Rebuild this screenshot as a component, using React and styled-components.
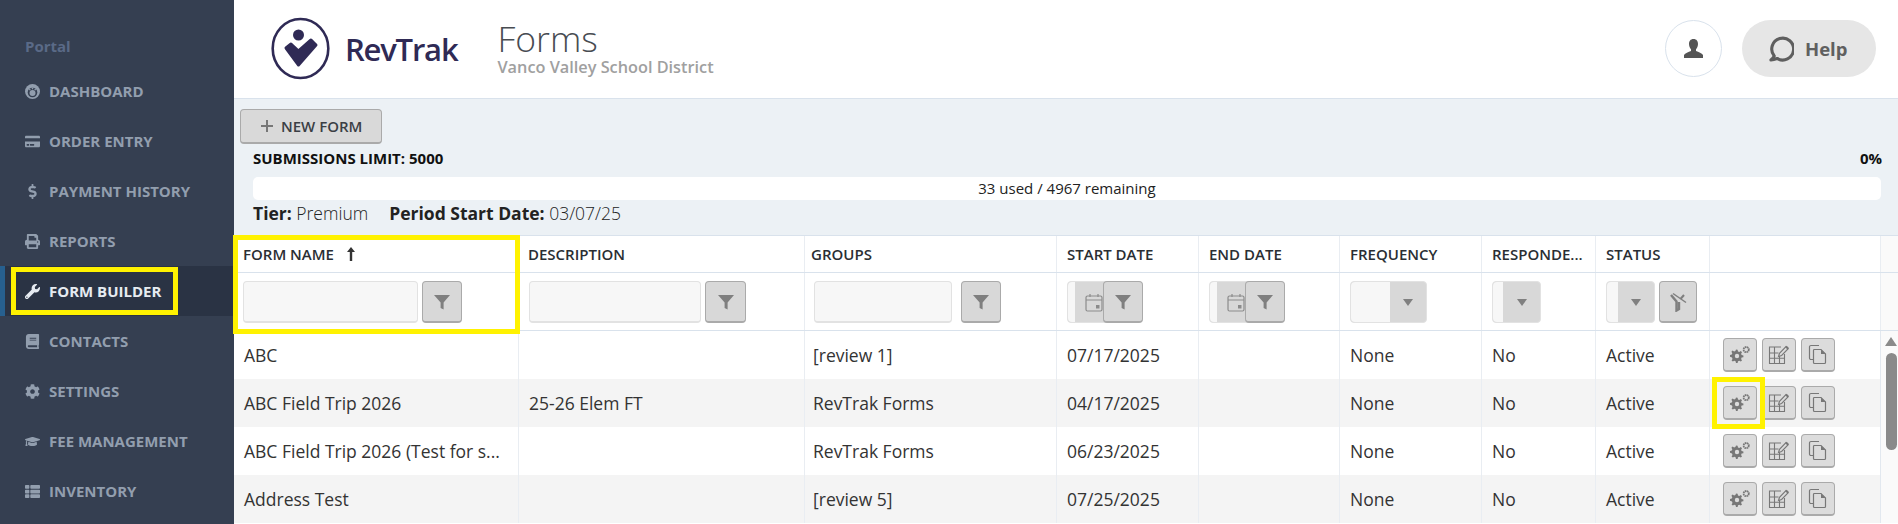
import React from "react";
import styled, { createGlobalStyle } from "styled-components";
import { FaCreditCard, FaDollarSign, FaPrint, FaWrench, FaBook, FaCog, FaGraduationCap, FaThList } from "react-icons/fa";

const Global = createGlobalStyle`
  html, body { margin: 0; padding: 0; height: 524px; overflow: hidden; background: #fff; }
  body { font-family: "Open Sans", "Liberation Sans", sans-serif; color: #333; }
  * { box-sizing: border-box; }
`;

const COLS = "285px 286px 252px 142px 141px 142px 114px 114px 171px 17px";

const Page = styled.div`display: flex; width: 1898px; height: 524px; position: relative; overflow: hidden;`;
const Sidebar = styled.nav`width: 234px; flex: none; background: #353f51; padding-top: 37px;`;
const PortalLabel = styled.div`height: 19px; margin: 0 0 10px 25px; font-size: 15px; line-height: 19px; font-weight: 700; color: #5a6a87;`;
const NavItem = styled.div`
  height: 50px; display: flex; align-items: center; padding-left: ${p => (p.$active ? 20 : 25)}px;
  gap: 9px; font-size: 15px; font-weight: 700;
  color: ${p => (p.$active ? "#e6ebf1" : "#929eae")};
  background: ${p => (p.$active ? "#2a3344" : "transparent")};
  border-left: ${p => (p.$active ? "5px solid #27608f" : "none")};
`;
const NavIcon = styled.span`width: 15px; display: flex; justify-content: center; font-size: 15px; flex: none;`;

const Main = styled.main`flex: 1; min-width: 0; display: flex; flex-direction: column;`;
const Header = styled.header`height: 99px; flex: none; display: flex; align-items: center; border-bottom: 1px solid #d9e2ec; padding: 0 0 1px 37px; background: #fff;`;
const LogoMark = styled.svg`width: 60px; height: 63px; flex: none;`;
const LogoText = styled.span`margin-left: 14px; margin-right: 40px; font-size: 31px; font-weight: 600; letter-spacing: -1.2px; color: #2f2a55; flex: none; line-height: 40px; white-space: nowrap;`;
const TitleBlock = styled.div`display: flex; flex-direction: column; margin-top: -1px;`;
const Title = styled.h1`margin: 0; font-size: 35.5px; line-height: 38px; font-weight: 300; color: #484c52;`;
const Subtitle = styled.div`font-size: 16.3px; line-height: 20px; font-weight: 600; color: #a0a0a0;`;
const HeaderRight = styled.div`margin-left: auto; display: flex; align-items: center; gap: 20px; padding-right: 22px;`;
const Avatar = styled.div`width: 57px; height: 57px; border-radius: 50%; border: 1px solid #d9e2ec; display: flex; align-items: center; justify-content: center;`;
const HelpButton = styled.div`width: 134px; height: 57px; border-radius: 29px; background: #e6e6e6; display: flex; align-items: center; padding-left: 26px; gap: 11px; font-size: 18.5px; font-weight: 700; color: #606060;`;

const Toolbar = styled.section`height: 137px; flex: none; background: #ecf1f5; border-bottom: 1px solid #d9e2ec; padding: 10px 16px 0 6px;`;
const NewFormButton = styled.div`width: 142px; height: 35px; border: 1px solid #aaa; border-bottom-width: 2px; border-radius: 4px; background: #d9d9d9; display: flex; align-items: center; padding-left: 19px; gap: 7px; font-size: 15px; font-weight: 600; color: #3b3f45;`;
const LimitRow = styled.div`display: flex; justify-content: space-between; margin: 4px 0 0 13px; font-size: 15px; line-height: 20px; font-weight: 700; color: #111;`;
const ProgressBar = styled.div`margin: 9px 1px 0 13px; height: 23px; border-radius: 5px; background: #fff; text-align: center; font-size: 15px; line-height: 23px; color: #222;`;
const TierRow = styled.div`margin: 2px 0 0 13px; font-size: 17.5px; line-height: 22px; font-weight: 300; color: #222; display: flex; gap: 21px;`;
const Strong = styled.b`font-weight: 700;`;

const GridRow = styled.div`
  display: grid; grid-template-columns: ${COLS}; flex: none; height: ${p => p.$h}px;
  background: ${p => (p.$stripe ? "#f4f4f4" : "#fff")};
  border-bottom: ${p => (p.$line ? "1px solid #d9e2ec" : "none")};
`;
const HeadCell = styled.div`
  padding-left: ${p => p.$pad ?? 10}px; display: flex; align-items: center; gap: 12px;
  font-size: 15px; font-weight: 600; color: #2a2e33; border-right: 1px solid #e9edf2; white-space: nowrap; overflow: hidden;
`;
const FilterCell = styled.div`padding: 8px 0 0 ${p => p.$pad ?? 10}px; display: flex; gap: ${p => p.$gap ?? 4}px; border-right: 1px solid #e9edf2;`;
const TextBox = styled.div`width: ${p => p.$w}px; height: 42px; background: #f7f7f7; border: 1px solid #e2e2e2; border-bottom-width: 2px; border-radius: 4px; flex: none;`;
const SquareBtn = styled.div`width: ${p => p.$w || 40}px; height: 42px; background: #d8d8d8; border: 1px solid #aaa; border-bottom-width: 2px; border-radius: 4px; display: flex; align-items: center; justify-content: center; flex: none;`;
const Picker = styled.div`width: ${p => p.$w}px; height: 42px; border-radius: 4px; background: #d8d8d8; border: 1px solid #e2e2e2; display: flex; flex: none; position: relative;`;
const PickerField = styled.div`width: ${p => p.$w}px; height: 100%; background: #f7f7f7; border-radius: 4px 0 0 4px; flex: none;`;
const PickerBody = styled.div`flex: 1; display: flex; align-items: center; justify-content: ${p => p.$left ? "flex-start" : "center"}; padding-left: ${p => p.$left ? 10 : 0}px;`;
const PickerBtn = styled(SquareBtn)`margin: -1px -1px -1px 0; width: 40px;`;
const Caret = styled.span`width: 0; height: 0; border-left: 5.5px solid transparent; border-right: 5.5px solid transparent; border-top: 7px solid #808080;`;

const Cell = styled.div`
  padding-left: ${p => p.$pad ?? 10}px; display: flex; align-items: center; gap: 5px; font-size: 17.5px; color: #333;
  border-right: 1px solid #e9edf2; white-space: nowrap; overflow: hidden;
`;
const ActionBtn = styled.div`width: 34px; height: 34px; background: #dcdcdc; border: 1px solid #aaa; border-bottom-width: 2px; border-radius: 4px; display: flex; align-items: center; justify-content: center; flex: none;`;
const ActionCell = styled(Cell)`padding-left: 13px; border-right: 1px solid #e2e8ef;`;
const ScrollCell = styled.div`background: #fafafa; position: relative;`;
const ScrollUp = styled.span`position: absolute; left: 4px; top: 6px; width: 0; height: 0; border-left: 6px solid transparent; border-right: 6px solid transparent; border-bottom: 9px solid #8a8a8a;`;
const ScrollThumb = styled.span`position: absolute; left: 5px; top: 22px; width: 11px; height: 97px; background: #8a8a8a; border-radius: 6px; z-index: 2;`;

const Highlight = styled.div`position: absolute; left: ${p => p.$x}px; top: ${p => p.$y}px; width: ${p => p.$w}px; height: ${p => p.$h}px; border: 5px solid #fff200; pointer-events: none; z-index: 3;`;

const Funnel = () => (
  <svg width="16" height="16" viewBox="0 0 16 16"><path d="M0 1h16L9.600 8.500V15.500L6.600 14V8.500z" fill="#7f7f7f" /></svg>
);
const FunnelOff = () => (
  <svg width="18" height="20" viewBox="0 0 18 20" fill="none">
    <path d="M2 3l5.500 6.500V18.500L10 17V10" stroke="#7f7f7f" strokeWidth="2.400" />
    <path d="M4 1.500l13 9" stroke="#7f7f7f" strokeWidth="1.500" />
    <path d="M15 3l-3.500 4" stroke="#7f7f7f" strokeWidth="2" />
  </svg>
);
const Dash = () => (
  <svg width="15" height="15" viewBox="0 0 15 15">
    <circle cx="7.500" cy="7.500" r="7.500" fill="currentColor" />
    <circle cx="7.500" cy="8.500" r="4.800" fill="#353f51" />
    <circle cx="7.500" cy="9" r="3" fill="currentColor" />
    <circle cx="4.800" cy="5.600" r=".8" fill="currentColor" />
    <circle cx="7.500" cy="4.600" r=".8" fill="currentColor" />
    <circle cx="10.200" cy="5.600" r=".8" fill="currentColor" />
  </svg>
);
const Calendar = () => (
  <svg width="18" height="19" viewBox="0 0 18 19" fill="none" stroke="#8b8b8b" strokeWidth="1.200">
    <rect x="1" y="3" width="16" height="15" rx="1.500" />
    <path d="M1 7h16M5 1v3M13 1v3" />
    <rect x="11" y="12" width="3.500" height="3.500" fill="#8b8b8b" stroke="none" />
  </svg>
);
const Cogs = () => (
  <svg width="22" height="20" viewBox="0 0 22 20">
    <path fill="#777" d="M7 4.600l1.600.1.4 1.700 1.300.6 1.500-.9 1.200 1.200-.9 1.500.5 1.300 1.800.4v1.700l-1.800.4-.5 1.300.9 1.500-1.200 1.200-1.500-.9-1.300.5-.4 1.800H7l-.4-1.800-1.300-.5-1.500.9-1.200-1.200.9-1.500-.5-1.300L1 11.700V10l1.800-.4.500-1.300-.9-1.500 1.200-1.200 1.500.9 1.300-.6z" />
    <circle cx="8" cy="11" r="2.200" fill="#dcdcdc" />
    <circle cx="17.200" cy="4.600" r="2.600" fill="none" stroke="#777" strokeWidth="1.800" strokeDasharray="1.600 .5" />
  </svg>
);
const GridEdit = () => (
  <svg width="22" height="21" viewBox="0 0 22 21" fill="none" stroke="#777" strokeWidth="1.100">
    <path d="M13 3H1.500v16.500h15V10M1.500 9h9M1.500 14.200h15M6.500 3v16.500M11.500 9v10.500" />
    <path d="M10.500 12.500l1-3.200L18 2.500l2.200 2.200-6.600 6.800z" fill="#dcdcdc" />
    <path d="M18 2.500l2.200 2.200" strokeWidth="2" />
  </svg>
);
const CopyDoc = () => (
  <svg width="20" height="21" viewBox="0 0 20 21" fill="none" stroke="#777" strokeWidth="1.200">
    <path d="M11 1.500H3A1.500 1.500 0 0 0 1.500 3v11A1.500 1.500 0 0 0 3 15.500h2" />
    <path d="M5.500 5.500h7.500l4.500 4.500v8.500a1 1 0 0 1-1 1h-10a1 1 0 0 1-1-1v-12a1 1 0 0 1 .5-1z" fill="#dcdcdc" />
    <path d="M13 5.500V10h4.500z" fill="#777" stroke="none" />
  </svg>
);
const UserGlyph = () => (
  <svg width="19" height="19" viewBox="0 0 19 19">
    <path d="M9.500 0C12.600 0 14 2.300 14 5c0 2.200-.9 4.200-2 5.200v1.700c2.500 1.100 6 2 7 4V19H0v-3.100c1-2 4.500-2.900 7-4v-1.700C5.900 9.200 5 7.200 5 5c0-2.700 1.400-5 4.500-5z" fill="#555" />
  </svg>
);
const Bubble = () => (
  <svg width="26" height="26" viewBox="0 0 25 25" fill="none" stroke="#5f5f5f" strokeWidth="3">
    <path d="M6 19.200A10.500 10.500 0 1 1 8.800 21.600c-1.800.6-3.800 1.200-6 1.500 1.500-1.200 2.700-2.400 3.200-3.900z" strokeLinejoin="round" />
  </svg>
);
const Plus = () => (
  <svg width="14" height="14" viewBox="0 0 14 14"><path d="M6 1h2v5h5v2H8v5H6V8H1V6h5z" fill="#777" /></svg>
);
const SortUp = () => (
  <svg width="10" height="14" viewBox="0 0 10 14"><path d="M5 0L9 5H6.200V14H3.800V5H1z" fill="#333" /></svg>
);

const nav = [
  ["DASHBOARD", Dash], ["ORDER ENTRY", FaCreditCard], ["PAYMENT HISTORY", FaDollarSign], ["REPORTS", FaPrint],
  ["FORM BUILDER", FaWrench, true], ["CONTACTS", FaBook], ["SETTINGS", FaCog], ["FEE MANAGEMENT", FaGraduationCap], ["INVENTORY", FaThList],
];
const heads = ["DESCRIPTION", "GROUPS", "START DATE", "END DATE", "FREQUENCY", "RESPONDE...", "STATUS"];
const rows = [
  ["ABC", "", "[review 1]", "07/17/2025"],
  ["ABC Field Trip 2026", "25-26 Elem FT", "RevTrak Forms", "04/17/2025"],
  ["ABC Field Trip 2026 (Test for s...", "", "RevTrak Forms", "06/23/2025"],
  ["Address Test", "", "[review 5]", "07/25/2025"],
];

export default function App() {
  return (
    <Page>
      <Global />
      <Sidebar>
        <PortalLabel>Portal</PortalLabel>
        {nav.map(([label, Icon, active]) => (
          <NavItem key={label} $active={active}>
            <NavIcon><Icon /></NavIcon>
            {label}
          </NavItem>
        ))}
      </Sidebar>
      <Main>
        <Header>
          <LogoMark viewBox="0 0 60 63" fill="none">
            <ellipse cx="29.500" cy="31.500" rx="27.800" ry="29.500" stroke="#2f2a55" strokeWidth="2.600" />
            <circle cx="27.500" cy="18" r="5.500" fill="#2f2a55" />
            <path d="M15 31l5-4 7.500 7L40 23l5 5-17.500 20z" fill="#2f2a55" stroke="#2f2a55" strokeWidth="3" strokeLinejoin="round" />
          </LogoMark>
          <LogoText>RevTrak</LogoText>
          <TitleBlock>
            <Title>Forms</Title>
            <Subtitle>Vanco Valley School District</Subtitle>
          </TitleBlock>
          <HeaderRight>
            <Avatar><UserGlyph /></Avatar>
            <HelpButton><Bubble />Help</HelpButton>
          </HeaderRight>
        </Header>
        <Toolbar>
          <NewFormButton><Plus />NEW FORM</NewFormButton>
          <LimitRow><span>SUBMISSIONS LIMIT: 5000</span><span>0%</span></LimitRow>
          <ProgressBar>33 used / 4967 remaining</ProgressBar>
          <TierRow>
            <span><Strong>Tier:</Strong> Premium</span>
            <span><Strong>Period Start Date:</Strong> 03/07/25</span>
          </TierRow>
        </Toolbar>
        <GridRow $h={37} $line>
          <HeadCell $pad={9}>FORM NAME <SortUp /></HeadCell>
          {heads.map((h, i) => <HeadCell key={h} $pad={i === 1 ? 6 : i === 0 ? 9 : 10}>{h}</HeadCell>)}
          <HeadCell />
          <ScrollCell />
        </GridRow>
        <GridRow $h={58} $line>
          <FilterCell $pad={9}><TextBox $w={175} /><SquareBtn><Funnel /></SquareBtn></FilterCell>
          <FilterCell><TextBox $w={172} /><SquareBtn $w={41}><Funnel /></SquareBtn></FilterCell>
          <FilterCell $pad={9} $gap={9}><TextBox $w={138} /><SquareBtn><Funnel /></SquareBtn></FilterCell>
          <FilterCell>
            <Picker $w={75}><PickerField $w={7} /><PickerBody $left><Calendar /></PickerBody><PickerBtn><Funnel /></PickerBtn></Picker>
          </FilterCell>
          <FilterCell>
            <Picker $w={74}><PickerField $w={7} /><PickerBody $left><Calendar /></PickerBody><PickerBtn><Funnel /></PickerBtn></Picker>
          </FilterCell>
          <FilterCell><Picker $w={77}><PickerField $w={39} /><PickerBody><Caret /></PickerBody></Picker></FilterCell>
          <FilterCell><Picker $w={49}><PickerField $w={10} /><PickerBody><Caret /></PickerBody></Picker></FilterCell>
          <FilterCell><Picker $w={49}><PickerField $w={11} /><PickerBody><Caret /></PickerBody></Picker><SquareBtn $w={38}><FunnelOff /></SquareBtn></FilterCell>
          <FilterCell />
          <ScrollCell />
        </GridRow>
        {rows.map((r, i) => (
          <GridRow key={r[0]} $h={48} $stripe={i % 2 === 1}>
            <Cell $pad={10}>{r[0]}</Cell>
            <Cell>{r[1]}</Cell>
            <Cell $pad={8}>{r[2]}</Cell>
            <Cell>{r[3]}</Cell>
            <Cell />
            <Cell>None</Cell>
            <Cell>No</Cell>
            <Cell>Active</Cell>
            <ActionCell>
              <ActionBtn><Cogs /></ActionBtn>
              <ActionBtn><GridEdit /></ActionBtn>
              <ActionBtn><CopyDoc /></ActionBtn>
            </ActionCell>
            <ScrollCell>
              {i === 0 && <ScrollUp />}
              {i === 0 && <ScrollThumb />}
            </ScrollCell>
          </GridRow>
        ))}
      </Main>
      <Highlight $x={11} $y={267} $w={167} $h={48} />
      <Highlight $x={233} $y={235} $w={287} $h={99} />
      <Highlight $x={1712} $y={377} $w={53} $h={52} />
    </Page>
  );
}
